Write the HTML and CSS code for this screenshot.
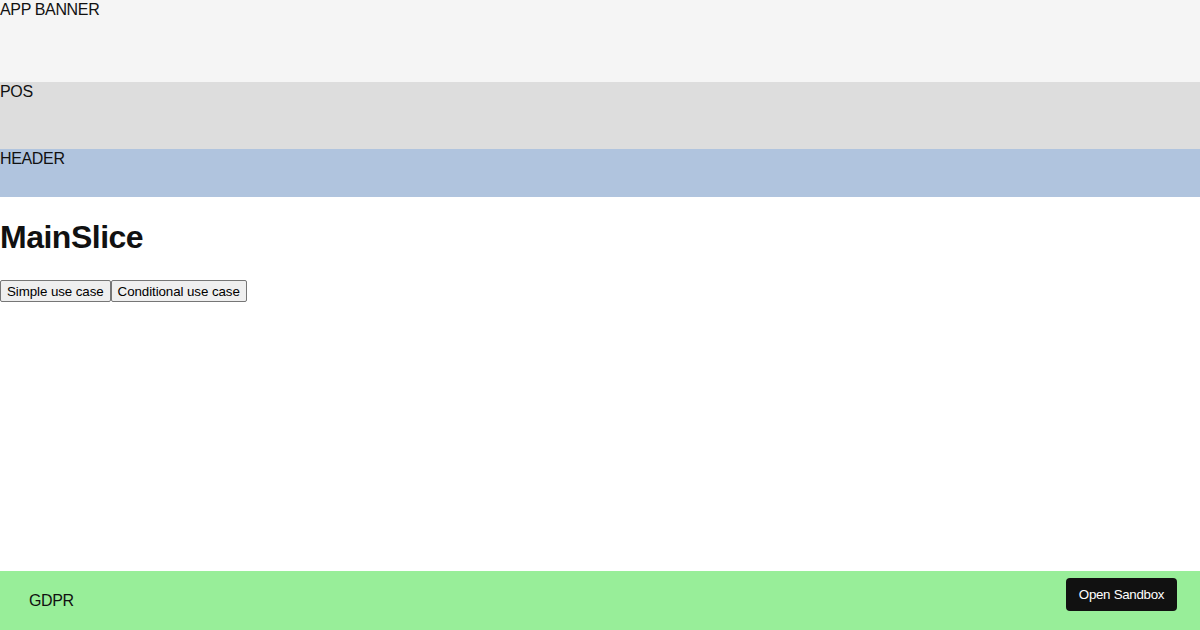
FILE: index.html
```html
<!DOCTYPE html>
<html>
<head>
<meta charset="utf-8">
<link rel="stylesheet" href="styles.css">
</head>
<body>
<div class="banner">APP BANNER</div>
<div class="pos">POS</div>
<div class="header">HEADER</div>
<main class="main">
  <h1 class="title">MainSlice</h1>
  <div class="buttons">
    <button class="btn">Simple use case</button><button class="btn">Conditional use case</button>
  </div>
</main>
<footer class="footer">
  <span class="gdpr">GDPR</span>
  <button class="sandbox">Open Sandbox</button>
</footer>
</body>
</html>
```
FILE: styles.css
```css
html, body {
  margin: 0;
  padding: 0;
  height: 100%;
}
body {
  font-family: "Liberation Sans", Arial, sans-serif;
  font-size: 16px;
  color: #111;
  display: flex;
  flex-direction: column;
  background: #fff;
  letter-spacing: -0.35px;
}
.banner {
  background: #f5f5f5;
  height: 82px;
  line-height: 19px;
}
.pos {
  background: #dddddd;
  height: 67px;
  line-height: 19px;
}
.header {
  background: #b0c4de;
  height: 48px;
  line-height: 19px;
}
.main {
  flex: 1;
}
.title {
  font-family: "Liberation Sans", Arial, sans-serif;
  font-size: 32px;
  font-weight: bold;
  margin: 22px 0 24px;
  line-height: 37px;
  letter-spacing: -0.5px;
}
.buttons {
  display: flex;
}
.btn {
  font-family: "Liberation Sans", Arial, sans-serif;
  font-size: 13.33px;
  letter-spacing: -0.08px;
  color: #000;
  background: #efefef;
  border: 1px solid #767676;
  border-radius: 2px;
  padding: 1px 6px;
  height: 22px;
  margin: 0;
}
.footer {
  background: #98ee99;
  height: 59px;
  display: flex;
  align-items: flex-start;
  justify-content: space-between;
  padding: 0 23px 0 29px;
}
.gdpr {
  margin-top: 20px;
  line-height: 19px;
}
.sandbox {
  margin-top: 7px;
  background: #111;
  color: #fff;
  border: none;
  border-radius: 4px;
  font-family: "Liberation Sans", Arial, sans-serif;
  font-size: 13.33px;
  letter-spacing: -0.3px;
  height: 33px;
  width: 111px;
  padding: 0;
}
```
